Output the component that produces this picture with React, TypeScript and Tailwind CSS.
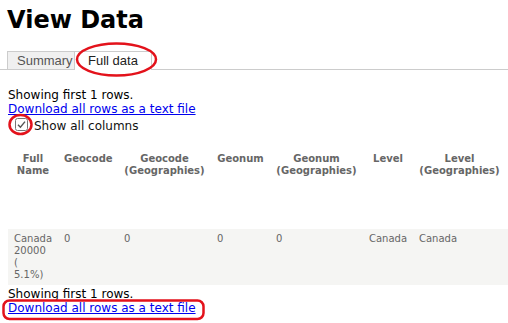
import React from 'react'

const headers: React.ReactNode[] = [
  <>Full<br />Name</>,
  'Geocode',
  <>Geocode<br />(Geographies)</>,
  'Geonum',
  <>Geonum<br />(Geographies)</>,
  'Level',
  <>Level<br />(Geographies)</>,
  '',
]

const cells: React.ReactNode[] = [
  <>Canada<br />20000<br />(<br />5.1%)</>,
  '0',
  '0',
  '0',
  '0',
  'Canada',
  'Canada',
  '',
]

const widths = ['w-[50px]', 'w-[60px]', 'w-[93px]', 'w-[59px]', 'w-[93px]', 'w-[50px]', 'w-[93px]', 'w-[100px]']

export default function App() {
  return (
    <div className="relative w-[508px] h-[323px] overflow-hidden bg-white font-['DejaVu_Sans',sans-serif] text-black">
      {/* title */}
      <h1 className="pl-[7px] pt-[8px] text-[24px] leading-[24px] font-bold">View Data</h1>

      {/* tabs */}
      <div className="mt-[19px] flex pl-[7px] border-b border-[#cccccc] font-['Liberation_Sans',Arial,sans-serif] text-[13px]">
        <div className="w-[68px] h-[18px] pl-[9px] leading-[17px] border-t border-l border-r border-[#cccccc] bg-[#f0f0f0] text-[#555555]">
          Summary
        </div>
        <div className="w-[77px] h-[19px] -mb-px text-center leading-[17px] border-t border-r border-[#cccccc] bg-white text-[#222222]">
          Full data
        </div>
      </div>

      {/* info */}
      <div className="pl-[8px] mt-[18px] text-[12px] leading-[14px]">
        <div>Showing first 1 rows.</div>
        <a href="#" className="text-[#0000ee] underline">Download all rows as a text file</a>
        <div className="flex items-start h-[19px]">
          <svg width="13" height="13" viewBox="0 0 13 13" className="ml-[7px] mt-[2px]">
            <rect x="0.5" y="0.5" width="12" height="12" rx="2" fill="white" stroke="#767676" />
            <path d="M3 6.8 L5.4 9.2 L10 3.6" fill="none" stroke="#555555" strokeWidth="1.4" />
          </svg>
          <span className="ml-[6px] mt-[3px] text-[#111111]">Show all columns</span>
        </div>

        {/* table */}
        <table className="mt-[14px] table-fixed w-[598px] text-[10px] leading-[12px] text-[#666666]">
          <thead>
            <tr className="h-[80px]">
              {headers.map((h, i) => (
                <th key={i} className={`${widths[i]} px-[6px] py-[4px] align-top text-center font-bold`}>
                  {h}
                </th>
              ))}
            </tr>
          </thead>
          <tbody>
            <tr className="bg-[#f5f5f3]">
              {cells.map((c, i) => (
                <td key={i} className="px-[6px] py-[4px] align-top text-left">
                  {c}
                </td>
              ))}
            </tr>
          </tbody>
        </table>

        <div className="mt-[2px]">Showing first 1 rows.</div>
        <a href="#" className="text-[#0000ee] underline">Download all rows as a text file</a>
      </div>

      {/* red annotation marks */}
      <svg className="absolute inset-0 pointer-events-none" width="508" height="323">
        <ellipse cx="116.5" cy="59.5" rx="39.5" ry="16" fill="none" stroke="#e3121b" strokeWidth="2.5" />
        <ellipse cx="20.5" cy="124.5" rx="11" ry="9.5" fill="none" stroke="#e3121b" strokeWidth="2.5" />
        <rect x="3.5" y="300.5" width="200" height="18.5" rx="6" fill="none" stroke="#e3121b" strokeWidth="2.5" />
      </svg>
    </div>
  )
}
